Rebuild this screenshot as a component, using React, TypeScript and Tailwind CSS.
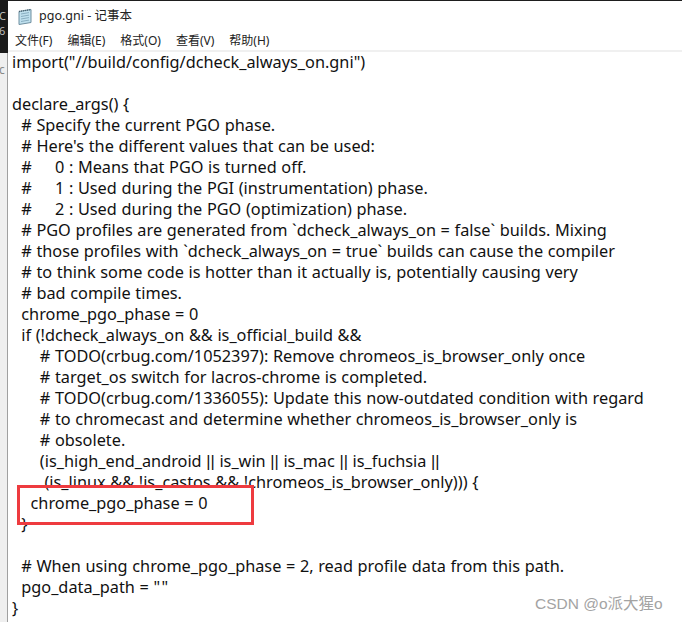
const lines: string[] = [
  'import("//build/config/dcheck_always_on.gni")',
  '',
  'declare_args() {',
  '  # Specify the current PGO phase.',
  "  # Here's the different values that can be used:",
  '  #     0 : Means that PGO is turned off.',
  '  #     1 : Used during the PGI (instrumentation) phase.',
  '  #     2 : Used during the PGO (optimization) phase.',
  '  # PGO profiles are generated from `dcheck_always_on = false` builds. Mixing',
  '  # those profiles with `dcheck_always_on = true` builds can cause the compiler',
  '  # to think some code is hotter than it actually is, potentially causing very',
  '  # bad compile times.',
  '  chrome_pgo_phase = 0',
  '  if (!dcheck_always_on && is_official_build &&',
  '      # TODO(crbug.com/1052397): Remove chromeos_is_browser_only once',
  '      # target_os switch for lacros-chrome is completed.',
  '      # TODO(crbug.com/1336055): Update this now-outdated condition with regard',
  '      # to chromecast and determine whether chromeos_is_browser_only is',
  '      # obsolete.',
  '      (is_high_end_android || is_win || is_mac || is_fuchsia ||',
  '       (is_linux && !is_castos && !chromeos_is_browser_only))) {',
  '    chrome_pgo_phase = 0',
  '  }',
  '',
  '  # When using chrome_pgo_phase = 2, read profile data from this path.',
  '  pgo_data_path = ""',
  '}',
];

const menus = ['文件(F)', '编辑(E)', '格式(O)', '查看(V)', '帮助(H)'];

function Code({ text }: { text: string }) {
  return (
    <>
      {text.split(/(\|\||"")/).map((part, i) =>
        part === '||' ? (
          <span key={i} className="font-['Liberation_Sans',sans-serif]">
            {part}
          </span>
        ) : part === '""' ? (
          <span key={i} className="tracking-[1.5px]">
            {part}
          </span>
        ) : (
          <span key={i}>{part}</span>
        ),
      )}
    </>
  );
}

export default function App() {
  return (
    <div className="relative flex h-[622px] w-[682px] overflow-hidden bg-white font-['Noto_Sans','Noto_Sans_CJK_SC',sans-serif]">
      <div className="flex w-[8px] shrink-0 flex-col">
        <div className="flex h-[53px] flex-col gap-[5px] overflow-hidden bg-[#1a1a1a] pt-[11px] text-[11px] leading-[10px] text-[#bdbdbd]">
          <span className="-ml-[1px]">C</span>
          <span className="-ml-[1px]">6</span>
        </div>
        <div className="flex-1 overflow-hidden border-r border-[#a0a0a0] bg-[#efefef] pt-[11px] text-[12px] leading-[12px] text-[#888]">
          <span className="-ml-[1px]">c</span>
        </div>
      </div>
      <div className="flex min-w-0 flex-1 flex-col">
        <div className="h-px bg-[#1e1e1e]" />
        <div className="flex h-[30px] items-center gap-[5px] pl-[8px] pt-[1px] text-[12.5px] text-[#222]">
          <svg width="18" height="18" viewBox="0 0 18 18">
            <path d="M3 3.5 L15 1.5 L15 14.5 L3 16.5 Z" fill="#bfe0ee" stroke="#6f8fa0" strokeWidth="1" />
            <path d="M5 6 L13 4.6 M5 8.5 L13 7.1 M5 11 L13 9.6 M5 13.5 L13 12.1" stroke="#7aa0b4" strokeWidth="0.8" />
            <path d="M3 3.5 L15 1.5" stroke="#47616f" strokeWidth="1.4" strokeDasharray="1 1" />
          </svg>
          <span>pgo.gni - 记事本</span>
        </div>
        <div className="flex h-[19px] items-center gap-[15px] pl-[7px] pt-[1px] text-[12px] text-[#222]">
          {menus.map((m) => (
            <span key={m}>{m}</span>
          ))}
        </div>
        <div className="h-[2px] bg-[#f0f0f0]" />
        <div className="flex-1 pl-[4px] text-[16.3px] leading-[21px] text-[#111] [word-spacing:0.4px]">
          {lines.map((t, i) => (
            <div key={i} className="h-[21px] whitespace-pre">
              <Code text={t} />
            </div>
          ))}
        </div>
      </div>
      <div className="absolute left-[17px] top-[485px] h-[40px] w-[237px] border-[3px] border-[#ee3b3f]" />
      <div className="absolute left-[535px] top-[594px] font-['Liberation_Sans','Noto_Sans_CJK_SC',sans-serif] text-[15.5px] leading-[20px] text-[#a3a3a3]">CSDN @o派大猩o</div>
    </div>
  );
}
